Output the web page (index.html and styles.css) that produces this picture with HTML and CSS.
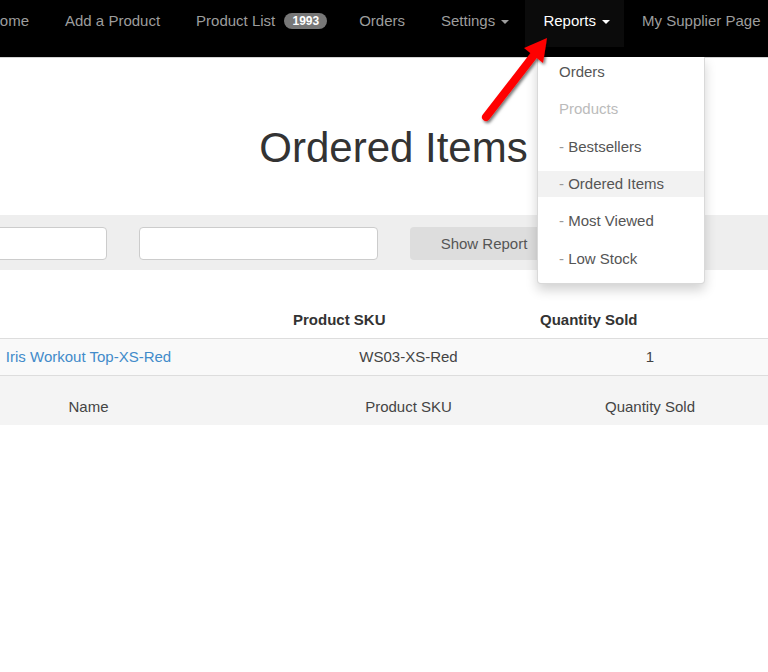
FILE: index.html
```html
<!DOCTYPE html>
<html lang="en">
<head>
<meta charset="utf-8">
<title>Ordered Items</title>
<link rel="stylesheet" href="styles.css">
</head>
<body>
<nav class="navbar">
  <ul class="nav">
    <li class="nav-item"><a class="nav-link" href="#">Home</a></li>
    <li class="nav-item"><a class="nav-link" href="#">Add a Product</a></li>
    <li class="nav-item"><a class="nav-link" href="#">Product List <span class="badge">1993</span></a></li>
    <li class="nav-item"><a class="nav-link" href="#">Orders</a></li>
    <li class="nav-item"><a class="nav-link has-caret" href="#">Settings <span class="caret"></span></a></li>
    <li class="nav-item active"><a class="nav-link has-caret" href="#">Reports <span class="caret"></span></a></li>
    <li class="nav-item"><a class="nav-link" href="#">My Supplier Page</a></li>
  </ul>
</nav>

<ul class="dropdown">
  <li><a class="dd-link" href="#">Orders</a></li>
  <li><span class="dd-link disabled">Products</span></li>
  <li><a class="dd-link" href="#"><span class="dash">-</span> Bestsellers</a></li>
  <li><a class="dd-link current" href="#"><span class="dash">-</span> Ordered Items</a></li>
  <li><a class="dd-link" href="#"><span class="dash">-</span> Most Viewed</a></li>
  <li><a class="dd-link" href="#"><span class="dash">-</span> Low Stock</a></li>
</ul>

<main class="page">
  <h1 class="title">Ordered Items</h1>

  <form class="filter-bar">
    <input class="field" type="text">
    <input class="field" type="text">
    <button class="btn" type="button">Show Report</button>
  </form>

  <table class="report">
    <colgroup>
      <col class="c-name">
      <col class="c-sku">
      <col class="c-qty">
    </colgroup>
    <thead>
      <tr><th>Name</th><th>Product SKU</th><th>Quantity Sold</th></tr>
    </thead>
    <tbody>
      <tr class="row"><td><a class="link" href="#">Iris Workout Top-XS-Red</a></td><td>WS03-XS-Red</td><td>1</td></tr>
    </tbody>
    <tfoot>
      <tr class="foot"><td>Name</td><td>Product SKU</td><td>Quantity Sold</td></tr>
    </tfoot>
  </table>
</main>

<svg class="arrow" width="768" height="672" viewBox="0 0 768 672">
  <defs>
    <filter id="sh" x="-20%" y="-20%" width="140%" height="140%">
      <feDropShadow dx="1.5" dy="2" stdDeviation="1.5" flood-color="#000" flood-opacity="0.55"/>
    </filter>
  </defs>
  <g filter="url(#sh)">
    <line x1="486" y1="117" x2="534" y2="55" stroke="#f00" stroke-width="8" stroke-linecap="round"/>
    <polygon points="547,38 524,48 543,63" fill="#f00"/>
  </g>
</svg>
</body>
</html>
```
FILE: styles.css
```css
html, body {
  margin: 0;
  padding: 0;
  background: #fff;
  overflow: hidden;
}
body {
  font-family: "Liberation Sans", Arial, sans-serif;
  font-size: 15px;
  line-height: 20px;
  color: #333;
  width: 768px;
  height: 672px;
}
a { text-decoration: none; }

.navbar {
  background: #000;
  height: 57px;
  border-bottom: 1px solid #d4d4d4;
}
.nav {
  list-style: none;
  margin: 0 0 0 -29px;
  padding: 0;
  display: flex;
  white-space: nowrap;
}
.nav-link {
  display: block;
  padding: 11px 18px 16px 18px;
  color: #9d9d9d;
}
.nav-link.has-caret { padding-right: 16px; }
.nav-item.active .nav-link {
  background: #0b0b0b;
  color: #fff;
  padding-right: 14px;
}
.badge {
  display: inline-block;
  margin-left: 5px;
  margin-right: -4px;
  padding: 0 8px;
  height: 16px;
  line-height: 16px;
  border-radius: 9px;
  background: #777;
  color: #fff;
  font-size: 12px;
  font-weight: bold;
  vertical-align: 1px;
}
.caret {
  display: inline-block;
  width: 0;
  height: 0;
  margin-left: 2px;
  vertical-align: middle;
  border-top: 4px solid;
  border-left: 4px solid transparent;
  border-right: 4px solid transparent;
}

.dropdown {
  position: absolute;
  left: 537px;
  top: 57px;
  width: 166px;
  margin: 0;
  padding: 2px 0 0 0;
  list-style: none;
  background: #fff;
  border: 1px solid rgba(0,0,0,0.15);
  border-top: 0;
  border-radius: 0 0 4px 4px;
  box-shadow: 0 6px 12px rgba(0,0,0,0.18);
  z-index: 5;
}
.dropdown li { margin-bottom: 11.33px; }
.dd-link {
  display: block;
  padding: 3px 21px;
  color: #555;
  white-space: nowrap;
}
.dd-link.disabled { color: #bbb; }
.dd-link.current { background: #f2f2f2; }
.dash { color: #999; }

.page { padding-top: 67px; }
.title {
  margin: 0;
  padding-left: 19px;
  text-align: center;
  font-size: 42px;
  line-height: 46px;
  font-weight: normal;
  color: #333;
}
.filter-bar {
  margin: 44px 0 0 0;
  background: #eee;
  height: 55px;
  box-sizing: border-box;
  padding-top: 12px;
  display: flex;
  gap: 32px;
}
.field {
  box-sizing: border-box;
  width: 239px;
  height: 33px;
  border: 1px solid #ccc;
  border-radius: 4px;
  background: #fff;
  margin: 0;
}
.field:first-child { margin-left: -132px; }
.btn {
  box-sizing: border-box;
  width: 148px;
  height: 33px;
  border: 0;
  border-radius: 4px;
  background: #ddd;
  color: #555;
  font-family: inherit;
  font-size: 15px;
  margin: 0;
  padding: 0;
}

.report {
  margin: 32px 0 0 -108px;
  width: 876px;
  table-layout: fixed;
  border-collapse: collapse;
}
.c-name { width: 393px; }
.c-sku { width: 247px; }
.c-qty { width: 236px; }
.report th {
  text-align: left;
  font-weight: bold;
  color: #333;
  padding: 8px;
  border-bottom: 1px solid #ddd;
}
.report td {
  text-align: center;
  padding: 8px;
  color: #444;
}
.row td {
  background: #f9f9f9;
  border-bottom: 1px solid #ddd;
}
.link { color: #428bca; }
.foot td {
  background: #f4f4f4;
  padding: 21px 8px 8px 8px;
  color: #444;
}

.arrow {
  position: absolute;
  left: 0;
  top: 0;
  pointer-events: none;
  z-index: 10;
}
```
